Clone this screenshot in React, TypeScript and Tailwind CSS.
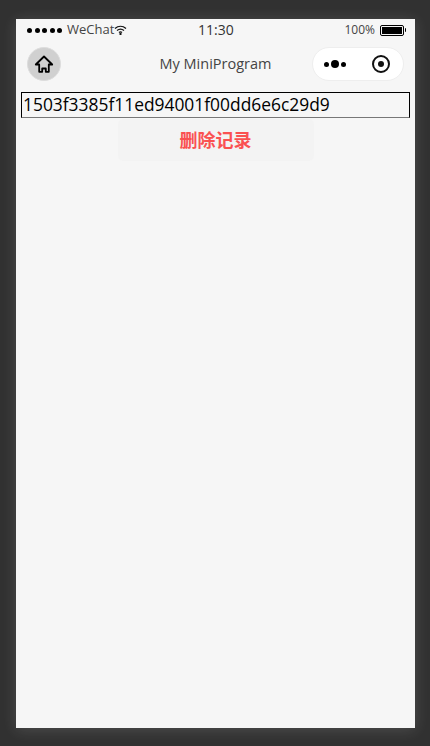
const fontClassName = "font-['Open_Sans','Noto_Sans','Noto_Sans_CJK_SC',sans-serif]";

function StatusBar() {
    return (
        <div className="relative flex h-[22px] items-center justify-between pl-[11px] pr-[9px] text-[13px] text-[#444]">
            <div className="flex items-center">
                <div className="flex gap-[2.5px]">
                    {[0, 1, 2, 3, 4].map((dot) => (
                        <span key={dot} className="h-[5px] w-[5px] rounded-full bg-black" />
                    ))}
                </div>
                <span className="ml-[5px]">WeChat</span>
                <svg width="13" height="10" viewBox="0 0 13 10" fill="none" stroke="#111" strokeWidth="1.3">
                    <path d="M1 3.5C4.3 .6 8.7 .6 12 3.5" />
                    <path d="M3 5.6C5.2 3.8 7.8 3.8 10 5.6" />
                    <path d="M5 7.6C5.9 6.8 7.1 6.8 8 7.6" />
                    <circle cx="6.5" cy="9" r=".5" fill="#111" />
                </svg>
            </div>
            <span className="absolute left-[182px] top-0 text-[14px] text-[#333]">11:30</span>
            <div className="flex items-center gap-[5px]">
                <span className="text-[12px]">100%</span>
                <div className="flex items-center">
                    <div className="h-[11px] w-[24px] rounded-[2px] border border-black bg-[#f6f6f6] p-[1px]">
                        <div className="h-full w-full bg-black" />
                    </div>
                    <div className="ml-[0.5px] h-[4px] w-[1.5px] rounded-r-full bg-black" />
                </div>
            </div>
        </div>
    );
}

function NavBar() {
    return (
        <div className="grid h-[45px] grid-cols-[1fr_auto_1fr] items-center pl-[11px] pr-[11px] pt-[1px]">
            <div className="flex h-[34px] w-[34px] items-center justify-center rounded-full border border-[#ddd] bg-[#d0d0d0]">
                <svg width="20" height="20" viewBox="0 0 20 20" fill="none" stroke="#000" strokeWidth="1.8" strokeLinejoin="round">
                    <path d="M10 2.5 18.2 10.5H14.8V17.8H11.8V14.5H8.2V17.8H5.2V10.5H1.8Z" />
                </svg>
            </div>
            <span className="text-[14.5px] text-[#444]">My MiniProgram</span>
            <div className="ml-auto flex h-[34px] w-[92px] items-center rounded-full border border-[#eee] bg-white pl-[11px]">
                <div className="flex items-center gap-[2px]">
                    <span className="h-[5px] w-[5px] rounded-full bg-black" />
                    <span className="h-[8px] w-[8px] rounded-full bg-black" />
                    <span className="h-[5px] w-[5px] rounded-full bg-black" />
                </div>
                <div className="ml-[26px] flex h-[18px] w-[18px] items-center justify-center rounded-full border-[2.5px] border-[#111]">
                    <span className="h-[6px] w-[6px] rounded-full bg-[#111]" />
                </div>
            </div>
        </div>
    );
}

export default function App() {
    return (
        <div className={`h-[746px] w-[430px] overflow-hidden bg-[#313131] pl-[16px] pt-[19px] ${fontClassName}`}>
            <div className="h-[709px] w-[399px] bg-[#f6f6f6] shadow-[0_2px_14px_rgba(255,255,255,0.14)]">
                <StatusBar />
                <NavBar />
                <div className="mx-[5px] mt-[6px] flex h-[26px] w-[389px] items-center border border-black border-b-[#777] pl-[1px] text-[17.4px] leading-none text-black">
                    1503f3385f11ed94001f00dd6e6c29d9
                </div>
                <button className="mx-auto mt-[1px] block h-[42px] w-[196px] rounded-[5px] bg-[#f3f3f3] text-[18px] font-bold text-[#fa5151]">
                    删除记录
                </button>
            </div>
        </div>
    );
}
